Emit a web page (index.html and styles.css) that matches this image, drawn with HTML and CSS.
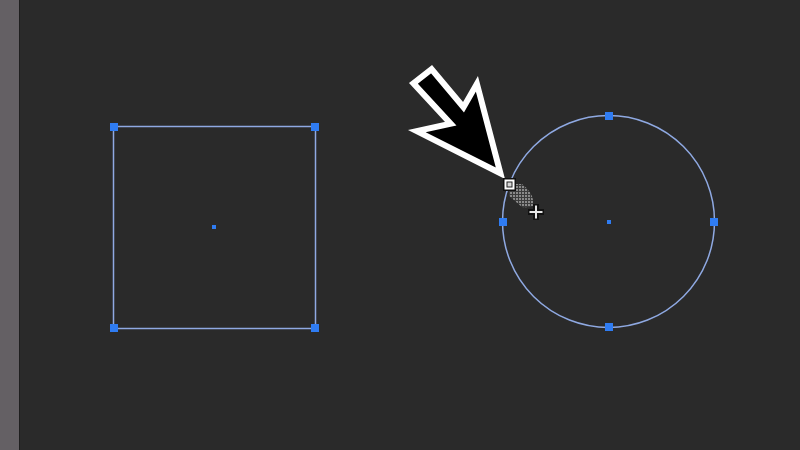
FILE: index.html
```html
<!DOCTYPE html>
<html>
<head>
<meta charset="utf-8">
<link rel="stylesheet" href="styles.css">
</head>
<body>
<div class="app">
  <div class="sidebar"></div>
  <div class="canvas">
    <svg class="art" width="780" height="450" viewBox="20 0 780 450" xmlns="http://www.w3.org/2000/svg">
      <defs>
        <pattern id="dots" x="0" y="0" width="3" height="3" patternUnits="userSpaceOnUse">
          <rect x="0" y="0" width="3" height="3" fill="#3c3c3c"/>
          <rect x="0" y="0" width="2" height="2" fill="#8a8a8a"/>
        </pattern>
      </defs>
      <!-- square -->
      <rect x="113.5" y="126.5" width="202" height="202" fill="none" stroke="#8fa9e2" stroke-width="1.5"/>
      <g fill="#2f7cf2">
        <rect x="110" y="123" width="8" height="8"/>
        <rect x="311" y="123" width="8" height="8"/>
        <rect x="110" y="324" width="8" height="8"/>
        <rect x="311" y="324" width="8" height="8"/>
        <rect x="212" y="225" width="4" height="4"/>
      </g>
      <!-- circle -->
      <circle cx="608.5" cy="221.5" r="106" fill="none" stroke="#8fa9e2" stroke-width="1.5"/>
      <g fill="#2f7cf2">
        <rect x="605" y="112" width="8" height="8"/>
        <rect x="499" y="218" width="8" height="8"/>
        <rect x="710" y="218" width="8" height="8"/>
        <rect x="605" y="323" width="8" height="8"/>
        <rect x="607" y="220" width="4" height="4"/>
      </g>
      <!-- cursor -->
      <path d="M515 184 L522 184 Q532 192 533 200 L533 206 Q528 208 522 207 L509 196 L509 190 Z" fill="url(#dots)"/>
      <polygon points="500.4,173.3 476.9,83.8 463.5,107.2 431.6,69.2 413.4,83.4 450.7,123.8 416.9,131.1" fill="#000" stroke="#fff" stroke-width="6" stroke-linejoin="miter"/>
      <rect x="503" y="178" width="13" height="13" fill="#111"/>
      <rect x="504.5" y="179.5" width="10" height="10" fill="#fff"/>
      <rect x="506.5" y="181.5" width="6" height="6" fill="#222"/>
      <rect x="507.5" y="182.5" width="4" height="4" fill="#d8d8d8"/>
      <path d="M536 204 V220 M528 212 H544" stroke="#111" stroke-width="6"/>
      <path d="M536 205.5 V218.5 M529.5 212 H542.5" stroke="#e6e6e6" stroke-width="2"/>
    </svg>
  </div>
</div>
</body>
</html>
```
FILE: styles.css
```css
html, body {
  margin: 0;
  padding: 0;
  background: #2a2a2a;
  overflow: hidden;
}
.app {
  display: flex;
  width: 800px;
  height: 450px;
}
.sidebar {
  width: 19px;
  background: #646064;
  border-right: 1px solid #1e1e1e;
}
.canvas {
  flex: 1;
  background: #2a2a2a;
}
.art {
  display: block;
}
```
